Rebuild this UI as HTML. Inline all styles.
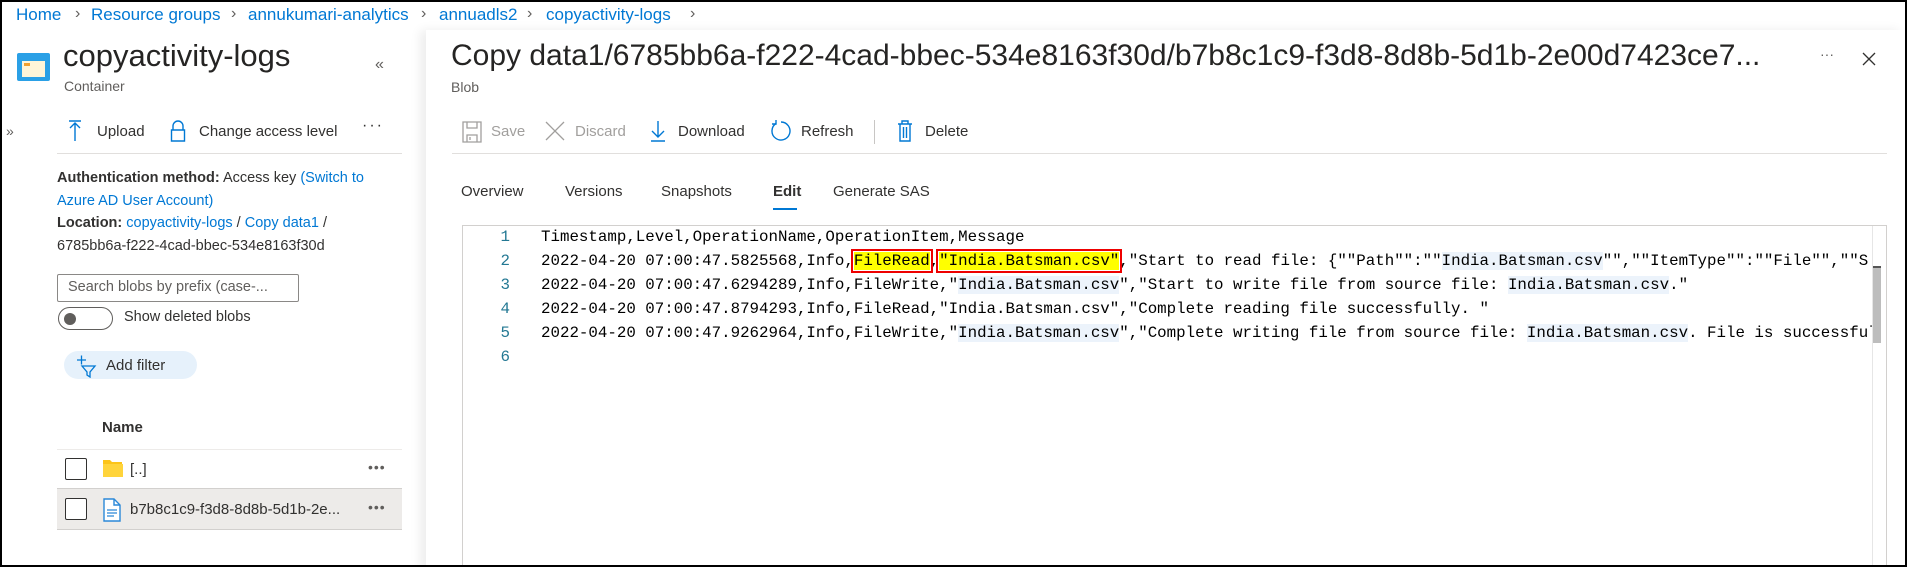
<!DOCTYPE html>
<html><head><meta charset="utf-8"><style>
*{margin:0;padding:0;box-sizing:border-box}
body{width:1907px;height:567px;overflow:hidden;background:#000;font-family:"Liberation Sans",sans-serif;color:#323130;position:relative}
#f{position:absolute;left:2px;top:2px;width:1903px;height:563px;background:#fff;overflow:hidden}
.a{position:absolute;white-space:nowrap}
.lk{color:#0078d4}
.bc{font-size:17px;top:3px}
.sep{color:#605e5c;font-size:16px;top:3px}
.t{font-size:15px}
.mono{font-family:"Liberation Mono",monospace;font-size:15.8px;color:#000}
.ln{color:#237893;width:20px;text-align:right}
.hl{background:#ecf3fb}
.y{background:#ffff00;outline:2px solid #e00;outline-offset:1px}
.cb{width:22px;height:22px;border:1px solid #323130;border-radius:2px;background:#fff}
</style></head><body><div id="f">
<!-- breadcrumb -->
<div class="a bc lk" style="left:14px">Home</div>
<div class="a sep" style="left:73px">›</div>
<div class="a bc lk" style="left:89px">Resource groups</div>
<div class="a sep" style="left:229px">›</div>
<div class="a bc lk" style="left:246px">annukumari-analytics</div>
<div class="a sep" style="left:419px">›</div>
<div class="a bc lk" style="left:437px">annuadls2</div>
<div class="a sep" style="left:525px">›</div>
<div class="a bc lk" style="left:544px">copyactivity-logs</div>
<div class="a sep" style="left:688px">›</div>

<!-- left panel -->
<div class="a" style="left:15px;top:51px;width:33px;height:28px;background:#2aa0e6;border-radius:2px"></div>
<div class="a" style="left:20px;top:59px;width:23px;height:16px;background:#fff5d8"></div>
<div class="a" style="left:22px;top:61px;width:6px;height:3px;background:#f0a030"></div>
<div class="a" style="left:61px;top:36px;font-size:31px;color:#252423">copyactivity-logs</div>
<div class="a t" style="left:62px;top:76px;color:#605e5c;font-size:14px">Container</div>
<div class="a" style="left:373px;top:54px;font-size:16px;color:#605e5c">«</div>
<div class="a" style="left:4px;top:121px;font-size:14px;color:#605e5c">»</div>

<svg class="a" style="left:66px;top:118px" width="14" height="22"><path d="M1 1H13M7 3V21M2 8L7 3L12 8" stroke="#0078d4" stroke-width="1.4" fill="none"/></svg>
<div class="a t" style="left:95px;top:121px">Upload</div>
<svg class="a" style="left:168px;top:118px" width="16" height="22"><path d="M3 10V6a5 5 0 0 1 10 0v4M1.5 10h13v11h-13z" stroke="#0078d4" stroke-width="1.4" fill="none"/></svg>
<div class="a t" style="left:197px;top:121px">Change access level</div>
<div class="a" style="left:360px;top:115px;font-size:16px;letter-spacing:2px">···</div>
<div class="a" style="left:55px;top:151px;width:345px;height:1px;background:#e1dfdd"></div>

<div class="a t" style="left:55px;top:165px;line-height:22.5px;white-space:normal;width:345px;font-size:14.5px"><b>Authentication method:</b> Access key <span class="lk">(Switch to<br>Azure AD User Account)</span><br><b>Location:</b> <span class="lk">copyactivity-logs</span> / <span class="lk">Copy data1</span> /<br>6785bb6a-f222-4cad-bbec-534e8163f30d</div>

<div class="a" style="left:55px;top:272px;width:242px;height:28px;border:1px solid #8a8886;border-radius:2px"></div>
<div class="a" style="left:66px;top:277px;font-size:14.5px;color:#605e5c">Search blobs by prefix (case-...</div>
<div class="a" style="left:56px;top:305px;width:55px;height:23px;border:1px solid #605e5c;border-radius:12px"></div>
<div class="a" style="left:62px;top:311px;width:12px;height:12px;background:#605e5c;border-radius:50%"></div>
<div class="a t" style="left:122px;top:307px;font-size:14.5px">Show deleted blobs</div>

<div class="a" style="left:62px;top:349px;width:133px;height:28px;background:#e6f1fb;border-radius:14px"></div>
<svg class="a" style="left:74px;top:352px" width="22" height="24"><path d="M1 6H10M5.5 1.5V10.5M6 12H19L14 18V23L11 21V18Z" stroke="#0078d4" stroke-width="1.3" fill="none"/></svg>
<div class="a t" style="left:104px;top:355px">Add filter</div>

<div class="a t" style="left:100px;top:417px;font-weight:bold;color:#323130">Name</div>
<div class="a" style="left:55px;top:447px;width:345px;height:1px;background:#edebe9"></div>
<div class="a" style="left:55px;top:486px;width:345px;height:1px;background:#d2d0ce"></div>
<div class="a" style="left:55px;top:487px;width:345px;height:40px;background:#edebe9"></div>
<div class="a" style="left:55px;top:527px;width:345px;height:1px;background:#d2d0ce"></div>
<div class="a cb" style="left:63px;top:456px"></div>
<div class="a cb" style="left:63px;top:496px"></div>
<svg class="a" style="left:100px;top:457px" width="22" height="20"><path d="M1 1h7l2 2h10v15H1z" fill="#fcc419"/><path d="M1 5h20v13H1z" fill="#ffd43b"/></svg>
<div class="a t" style="left:128px;top:459px">[..]</div>
<svg class="a" style="left:101px;top:496px" width="18" height="24"><path d="M1 1h10l6 6v16H1z" fill="#fff" stroke="#2b88d8" stroke-width="1.4"/><path d="M11 1v6h6" fill="none" stroke="#2b88d8" stroke-width="1.4"/><path d="M4 12h10M4 15h10M4 18h7" stroke="#2b88d8" stroke-width="1.3"/></svg>
<div class="a t" style="left:128px;top:499px">b7b8c1c9-f3d8-8d8b-5d1b-2e...</div>
<div class="a" style="left:366px;top:457px;font-size:14px;letter-spacing:1px;color:#605e5c">•••</div>
<div class="a" style="left:366px;top:497px;font-size:14px;letter-spacing:1px;color:#605e5c">•••</div>

<!-- right panel -->
<div class="a" style="left:424px;top:28px;width:1479px;height:540px;background:#fff;box-shadow:-6px 0 10px rgba(0,0,0,0.07)"></div>
<div class="a" style="left:449px;top:37px;font-size:30px;color:#252423">Copy data1/6785bb6a-f222-4cad-bbec-534e8163f30d/b7b8c1c9-f3d8-8d8b-5d1b-2e00d7423ce7...</div>
<div class="a" style="left:449px;top:77px;font-size:14px;color:#605e5c">Blob</div>
<div class="a" style="left:1818px;top:44px;font-size:14px;color:#605e5c">···</div>
<svg class="a" style="left:1860px;top:50px" width="14" height="14"><path d="M1 1L13 13M13 1L1 13" stroke="#323130" stroke-width="1.3"/></svg>

<svg class="a" style="left:460px;top:119px" width="20" height="22"><path d="M1 1h18v20H1zM5 1v6h10V1M5 21v-7h10v7M8 16v3" stroke="#a19f9d" stroke-width="1.3" fill="none"/></svg>
<div class="a t" style="left:489px;top:121px;color:#a19f9d">Save</div>
<svg class="a" style="left:543px;top:119px" width="20" height="20"><path d="M1 1L19 19M19 1L1 19" stroke="#a19f9d" stroke-width="1.3"/></svg>
<div class="a t" style="left:573px;top:121px;color:#a19f9d">Discard</div>
<svg class="a" style="left:648px;top:118px" width="16" height="22"><path d="M8 1v16M2 11l6 6 6-6M1 21h14" stroke="#0078d4" stroke-width="1.4" fill="none"/></svg>
<div class="a t" style="left:676px;top:121px">Download</div>
<svg class="a" style="left:768px;top:118px" width="22" height="22"><path d="M6 3.5A9 9 0 1 0 11 2" stroke="#0078d4" stroke-width="1.4" fill="none"/><path d="M6 0v4H2" stroke="#0078d4" stroke-width="1.4" fill="none"/></svg>
<div class="a t" style="left:799px;top:121px">Refresh</div>
<div class="a" style="left:872px;top:118px;width:1px;height:24px;background:#c8c6c4"></div>
<svg class="a" style="left:895px;top:118px" width="16" height="22"><path d="M1 4h14M5 4V1h6v3M3 4v17h10V4M6.5 7v11M9.5 7v11" stroke="#0078d4" stroke-width="1.4" fill="none"/></svg>
<div class="a t" style="left:923px;top:121px">Delete</div>
<div class="a" style="left:450px;top:151px;width:1435px;height:1px;background:#e1dfdd"></div>

<div class="a t" style="left:459px;top:181px">Overview</div>
<div class="a t" style="left:563px;top:181px">Versions</div>
<div class="a t" style="left:659px;top:181px">Snapshots</div>
<div class="a t" style="left:771px;top:181px;font-weight:bold">Edit</div>
<div class="a" style="left:771px;top:206px;width:24px;height:2px;background:#0078d4"></div>
<div class="a t" style="left:831px;top:181px">Generate SAS</div>

<div class="a" style="left:460px;top:223px;width:1425px;height:345px;border:1px solid #d2d0ce;overflow:hidden">
 <div class="a" style="left:1409px;top:0;width:1px;height:345px;background:#e6e6e6"></div>
 <div class="a" style="left:1410px;top:40px;width:8px;height:77px;background:#bdbdbd;border-top:2px solid #555"></div>
 <div class="a mono" style="left:0;top:-1px;width:1409px;height:340px;overflow:hidden;line-height:24px">
  <div class="a ln" style="left:27px;top:0">1<br>2<br>3<br>4<br>5<br>6</div>
  <div class="a" style="left:78px;top:0">Timestamp,Level,OperationName,OperationItem,Message<br>2022-04-20 07:00:47.5825568,Info,<span class="y">FileRead</span>,<span class="y">"India.Batsman.csv"</span>,"Start to read file: {""Path"":""<span class="hl">India.Batsman.csv</span>"",""ItemType"":""File"",""S<br>2022-04-20 07:00:47.6294289,Info,FileWrite,"<span class="hl">India.Batsman.csv</span>","Start to write file from source file: <span class="hl">India.Batsman.csv</span>."<br>2022-04-20 07:00:47.8794293,Info,FileRead,"India.Batsman.csv","Complete reading file successfully. "<br>2022-04-20 07:00:47.9262964,Info,FileWrite,"<span class="hl">India.Batsman.csv</span>","Complete writing file from source file: <span class="hl">India.Batsman.csv</span>. File is successfully</div>
 </div>
</div>
</div></body></html>
